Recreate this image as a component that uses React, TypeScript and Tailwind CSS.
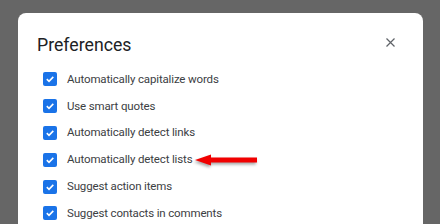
import React from 'react';

const items = [
  'Automatically capitalize words',
  'Use smart quotes',
  'Automatically detect links',
  'Automatically detect lists',
  'Suggest action items',
  'Suggest contacts in comments',
];

function Check() {
  return (
    <div className="w-[14px] h-[14px] rounded-[2px] bg-[#1a73e8] flex items-center justify-center shrink-0">
      <svg width="10" height="10" viewBox="0 0 10 10">
        <path d="M1.8 5.2 L4 7.3 L8.3 2.9" fill="none" stroke="white" strokeWidth="1.6" />
      </svg>
    </div>
  );
}

export default function App() {
  return (
    <div className="w-[440px] h-[224px] bg-[#666666] overflow-hidden pt-[13px] pl-[18px]" style={{ fontFamily: 'Roboto, "Liberation Sans", sans-serif' }}>
      <div className="w-[405px] h-[260px] bg-white rounded-t-[8px] px-[19px] pt-[21px]">
        <div className="flex items-start justify-between">
          <h1 className="text-[17.7px] leading-[22px] text-[#202124]">Preferences</h1>
          <svg width="9" height="9" viewBox="0 0 9 9" className="mt-[4px] mr-[9px]">
            <path d="M0.5 0.5 L8.5 8.5 M8.5 0.5 L0.5 8.5" stroke="#5f6368" strokeWidth="1.2" />
          </svg>
        </div>
        <div className="mt-[10px] pl-[6px]">
          {items.map((label, i) => (
            <div key={label} className="h-[26.8px] flex items-center gap-[10px]">
              <Check />
              <span className="text-[11.5px] tracking-[-0.15px] text-[#3c4043]">{label}</span>
              {i === 3 && (
                <svg width="64" height="14" viewBox="0 0 64 14" className="-ml-[7px] mt-[2px]" style={{ filter: 'drop-shadow(-1px 2px 1.5px rgba(0,0,0,0.35))' }}>
                  <path d="M0 6 L16 0.5 L16 3.5 L62 3.5 L62 8.5 L16 8.5 L16 11.5 Z" fill="#f10000" />
                </svg>
              )}
            </div>
          ))}
        </div>
      </div>
    </div>
  );
}
